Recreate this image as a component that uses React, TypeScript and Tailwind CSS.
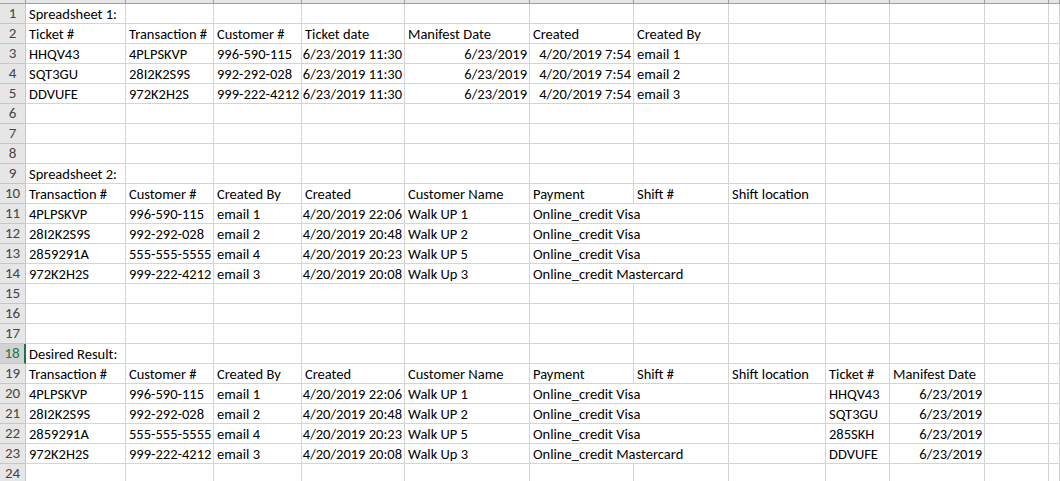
import React from "react";

type Cell = { t?: string; r?: boolean; span?: boolean };

const E: Cell = {};

const h2 = ["Transaction #", "Customer #", "Created By", "Created", "Customer Name", "Payment", "Shift #", "Shift location"];

function txt(s: string): Cell { return { t: s }; }
function num(s: string): Cell { return { t: s, r: true }; }

const rows: Cell[][] = [
  [txt("Spreadsheet 1:")],
  ["Ticket #", "Transaction #", "Customer #", "Ticket date", "Manifest Date", "Created", "Created By"].map(txt),
  [txt("HHQV43"), txt("4PLPSKVP"), txt("996-590-115"), num("6/23/2019 11:30"), num("6/23/2019"), num("4/20/2019 7:54"), txt("email 1")],
  [txt("SQT3GU"), txt("28I2K2S9S"), txt("992-292-028"), num("6/23/2019 11:30"), num("6/23/2019"), num("4/20/2019 7:54"), txt("email 2")],
  [txt("DDVUFE"), txt("972K2H2S"), txt("999-222-4212"), num("6/23/2019 11:30"), num("6/23/2019"), num("4/20/2019 7:54"), txt("email 3")],
  [],
  [],
  [],
  [txt("Spreadsheet 2:")],
  h2.map(txt),
  [txt("4PLPSKVP"), txt("996-590-115"), txt("email 1"), num("4/20/2019 22:06"), txt("Walk UP 1"), { t: "Online_credit Visa", span: true }],
  [txt("28I2K2S9S"), txt("992-292-028"), txt("email 2"), num("4/20/2019 20:48"), txt("Walk UP 2"), { t: "Online_credit Visa", span: true }],
  [txt("2859291A"), txt("555-555-5555"), txt("email 4"), num("4/20/2019 20:23"), txt("Walk UP 5"), { t: "Online_credit Visa", span: true }],
  [txt("972K2H2S"), txt("999-222-4212"), txt("email 3"), num("4/20/2019 20:08"), txt("Walk Up 3"), { t: "Online_credit Mastercard", span: true }],
  [],
  [],
  [],
  [txt("Desired Result:")],
  [...h2.map(txt), txt("Ticket #"), txt("Manifest Date")],
  [txt("4PLPSKVP"), txt("996-590-115"), txt("email 1"), num("4/20/2019 22:06"), txt("Walk UP 1"), { t: "Online_credit Visa", span: true }, E, txt("HHQV43"), num("6/23/2019")],
  [txt("28I2K2S9S"), txt("992-292-028"), txt("email 2"), num("4/20/2019 20:48"), txt("Walk UP 2"), { t: "Online_credit Visa", span: true }, E, txt("SQT3GU"), num("6/23/2019")],
  [txt("2859291A"), txt("555-555-5555"), txt("email 4"), num("4/20/2019 20:23"), txt("Walk UP 5"), { t: "Online_credit Visa", span: true }, E, txt("285SKH"), num("6/23/2019")],
  [txt("972K2H2S"), txt("999-222-4212"), txt("email 3"), num("4/20/2019 20:08"), txt("Walk Up 3"), { t: "Online_credit Mastercard", span: true }, E, txt("DDVUFE"), num("6/23/2019")],
  [],
];

const NCOLS = 12;

function buildCells(row: Cell[]): Cell[] {
  const out: Cell[] = [];
  let used = 0;
  for (const c of row) {
    out.push(c);
    used += c.span ? 2 : 1;
  }
  while (used < NCOLS) {
    out.push(E);
    used += 1;
  }
  return out;
}

const gridCols =
  "grid grid-cols-[26px_100px_88px_88px_103px_125px_104px_95px_97px_64px_95px_64px_1fr]";

export default function App() {
  return (
    <div
      className="w-[1060px] h-[481px] overflow-hidden bg-white text-black"
      style={{ fontFamily: "Carlito, Calibri, Lato, 'Open Sans', sans-serif" }}
    >
      {/* column header strip (mostly cut off) */}
      <div className={`${gridCols} h-[4px]`}>
        {Array.from({ length: 13 }).map((_, i) => (
          <div key={i} className="bg-[#e6e6e6] border-r border-b border-[#9f9f9f]" />
        ))}
      </div>
      <div className={`${gridCols} auto-rows-[20px]`}>
        {rows.map((row, ri) => {
          const selected = ri === 17;
          return (
            <React.Fragment key={ri}>
              <div
                className={
                  selected
                    ? "relative flex items-end justify-center pb-[1px] bg-[#d2d2d2] border-b border-[#c6c6c6] text-[#217346] text-[15px] leading-[17px] border-r-2 border-r-[#217346]"
                    : "flex items-end justify-center pb-[1px] bg-[#e6e6e6] border-r border-b border-[#c6c6c6] text-[#444444] text-[15px] leading-[17px]"
                }
              >
                {ri + 1}
              </div>
              {buildCells(row).map((c, ci) => (
                <div
                  key={ci}
                  className={`${c.span ? "col-span-2 " : ""}${
                    c.r ? "justify-end pr-[2px] " : "justify-start pl-[3px] "
                  }flex items-end pb-0 border-r border-b border-[#d4d4d4] whitespace-nowrap text-[14.5px] leading-[17px]`}
                >
                  {c.t ?? ""}
                </div>
              ))}
            </React.Fragment>
          );
        })}
      </div>
    </div>
  );
}
